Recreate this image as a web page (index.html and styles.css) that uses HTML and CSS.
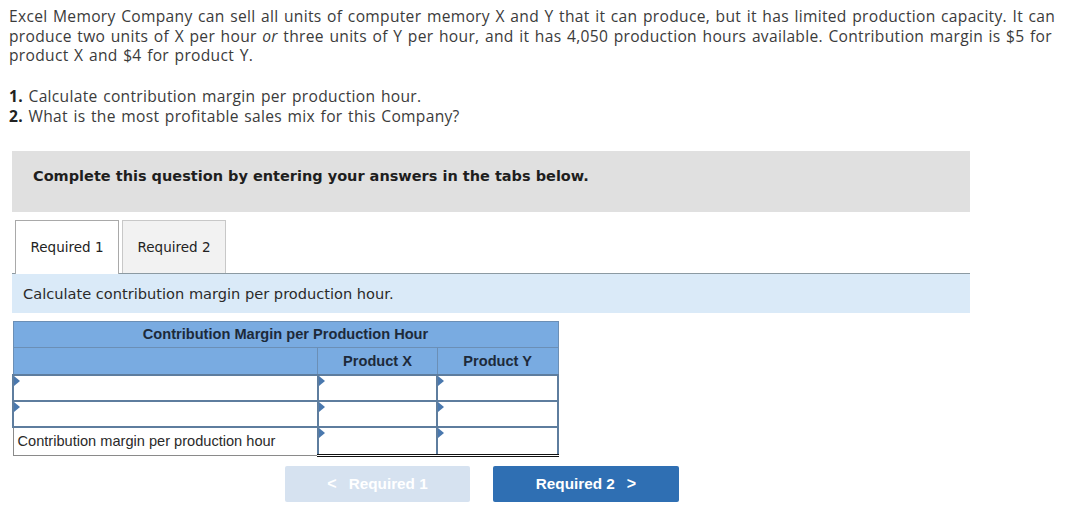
FILE: index.html
```html
<!DOCTYPE html>
<html lang="en">
<head>
<meta charset="utf-8">
<title>Excel Memory Company</title>
<link rel="stylesheet" href="styles.css">
</head>
<body>
<div class="page">
  <p class="intro">Excel Memory Company can sell all units of computer memory X and Y that it can produce, but it has limited production capacity. It can produce two units of X per hour <em>or</em> three units of Y per hour, and it has 4,050 production hours available. Contribution margin is $5 for product X and $4 for product Y.</p>
  <ol class="reqs">
    <li><b>1.</b> Calculate contribution margin per production hour.</li>
    <li><b>2.</b> What is the most profitable sales mix for this Company?</li>
  </ol>

  <div class="notice">Complete this question by entering your answers in the tabs below.</div>

  <div class="tabs">
    <div class="tab active">Required 1</div>
    <div class="tab">Required 2</div>
  </div>
  <div class="panel-head">Calculate contribution margin per production hour.</div>

  <table class="cm">
    <thead>
      <tr><th colspan="3" class="title">Contribution Margin per Production Hour</th></tr>
      <tr class="cols"><th class="c1"></th><th class="c2">Product X</th><th class="c3">Product Y</th></tr>
    </thead>
    <tbody>
      <tr class="in"><td class="cell"></td><td class="cell"></td><td class="cell"></td></tr>
      <tr class="in"><td class="cell"></td><td class="cell"></td><td class="cell"></td></tr>
      <tr class="total"><td class="label">Contribution margin per production hour</td><td class="cell tot"></td><td class="cell tot"></td></tr>
    </tbody>
  </table>

  <div class="nav">
    <button class="btn prev"><span class="chev">&lt;</span> Required 1</button>
    <button class="btn next">Required 2 <span class="chev">&gt;</span></button>
  </div>
</div>
</body>
</html>
```

FILE: styles.css
```css
* { box-sizing: border-box; }
body { margin: 0; background: #fff; }
.page { padding: 7px 0 0 0; width: 1084px; }

.intro {
  margin: 0 0 0 9px;
  width: 1070px;
  font-family: "Open Sans", "Liberation Sans", sans-serif;
  font-size: 15.6px;
  line-height: 19.7px;
  letter-spacing: 0.3px;
  word-spacing: 1.2px;
  color: #3b3b3b;
}
.intro em { font-style: italic; }

.reqs {
  list-style: none;
  margin: 19.5px 0 0 9px;
  padding: 0;
  font-family: "Open Sans", "Liberation Sans", sans-serif;
  font-size: 15.6px;
  line-height: 20px;
  letter-spacing: 0.3px;
  word-spacing: 1.2px;
  color: #3b3b3b;
}
.reqs b { font-weight: 700; color: #222; }

.notice {
  margin: 25px 0 0 12px;
  width: 958px;
  height: 61px;
  background: #e0e0e0;
  padding: 16px 0 0 21px;
  font-family: "DejaVu Sans", Verdana, sans-serif;
  font-weight: 700;
  font-size: 14.5px;
  line-height: 18px;
  color: #1e1e1e;
}

.tabs {
  margin: 8px 0 0 12px;
  width: 958px;
  display: flex;
  gap: 3px;
  padding-left: 3px;
  border-bottom: 1px solid #8c9aa2;
  height: 54px;
}
.tab {
  width: 104px;
  height: 53px;
  border: 1px solid #c8c8c8;
  border-bottom: none;
  background: #f2f2f2;
  display: flex;
  align-items: center;
  justify-content: center;
  font-family: "DejaVu Sans", Verdana, sans-serif;
  font-size: 13.5px;
  color: #222;
}
.tab.active {
  background: #fff;
  border-color: #a9a9a9;
  height: 54px;
  margin-bottom: -1px;
}

.panel-head {
  margin-left: 12px;
  width: 958px;
  height: 39px;
  background: #daeaf8;
  padding-left: 11px;
  display: flex;
  align-items: center;
  font-family: "DejaVu Sans", Verdana, sans-serif;
  font-size: 14.6px;
  color: #2a2a2a;
}

.cm {
  margin: 8px 0 0 12px;
  border-collapse: collapse;
  width: 547px;
  font-family: "Liberation Sans", Arial, sans-serif;
  font-size: 14.6px;
}
.cm th {
  background: #79abe1;
  color: #1d2a3a;
  font-weight: 700;
  border: 1px solid #6b8fb6;
  padding: 0;
  text-align: center;
}
.cm th.title { height: 26px; }
.cm tr.cols th { height: 28px; }
.cm .c1 { width: 306px; }
.cm .c2 { width: 120px; }
.cm .c3 { width: 121px; }

.cm td {
  padding: 0;
  position: relative;
  background: #fff;
}
.cm tr.in td { height: 26px; border: 2px solid #5e7d9e; }
.cm td.cell::before {
  content: "";
  position: absolute;
  left: 0;
  top: 0;
  border-top: 5px solid transparent;
  border-bottom: 5px solid transparent;
  border-left: 6px solid #4a78ae;
}
.cm tr.total td { height: 28px; }
.cm td.label {
  border: 1px solid #8a8a8a;
  padding-left: 4px;
  color: #2a2a2a;
  vertical-align: middle;
}
.cm td.tot {
  border-top: 2px solid #1b2533;
  border-left: 2px solid #5e7d9e;
  border-right: 2px solid #5e7d9e;
  border-bottom: 3px double #111;
}

.nav {
  margin: 9px 0 0 285px;
  display: flex;
  gap: 23px;
}
.btn {
  width: 186px;
  height: 36px;
  border: none;
  border-radius: 2px;
  font-family: "Liberation Sans", Arial, sans-serif;
  font-weight: 700;
  font-size: 15.3px;
  color: #fff;
  display: flex;
  align-items: center;
  justify-content: center;
  gap: 12px;
  padding: 0;
}
.btn .chev { font-size: 16px; }
.prev { background: #d6e2f0; width: 185px; }
.next { background: #2f6fb3; }
```
